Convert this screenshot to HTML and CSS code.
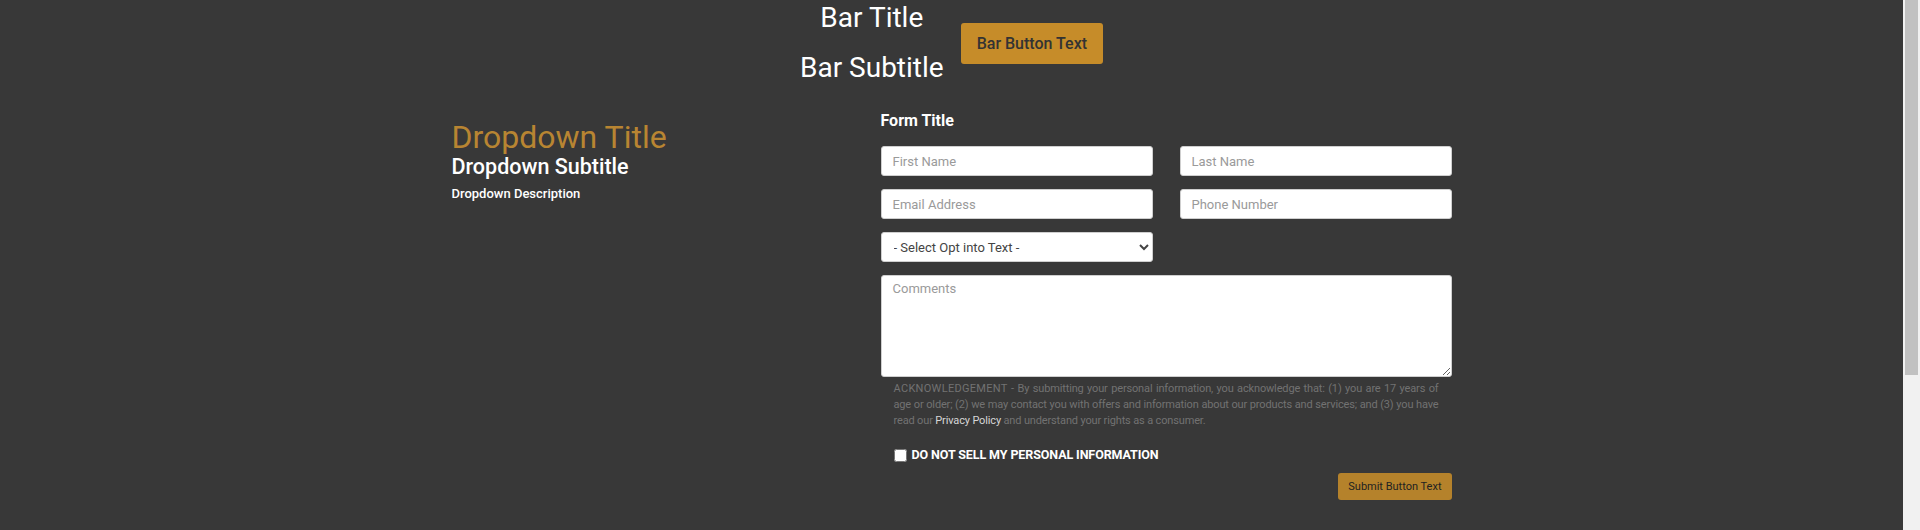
FILE: index.html
```html
<!DOCTYPE html>
<html lang="en">
<head>
<meta charset="utf-8">
<title>Lead Form</title>
<link rel="stylesheet" href="styles.css">
</head>
<body>
<header class="bar">
  <div class="bar-text">
    <div class="bar-title">Bar Title</div>
    <div class="bar-subtitle">Bar Subtitle</div>
  </div>
  <a class="bar-button" href="#">Bar Button Text</a>
</header>
<main class="content">
  <section class="intro">
    <h2 class="dd-title">Dropdown Title</h2>
    <h3 class="dd-subtitle">Dropdown Subtitle</h3>
    <p class="dd-desc">Dropdown Description</p>
  </section>
  <form class="lead-form" onsubmit="return false;">
    <h4 class="form-title">Form Title</h4>
    <div class="fields">
      <input class="field" type="text" placeholder="First Name">
      <input class="field" type="text" placeholder="Last Name">
      <input class="field" type="email" placeholder="Email Address">
      <input class="field" type="tel" placeholder="Phone Number">
      <select class="field select">
        <option>- Select Opt into Text -</option>
        <option>Yes</option>
        <option>No</option>
      </select>
      <textarea class="field comments" placeholder="Comments"></textarea>
    </div>
    <p class="ack"><span class="ack-lead">ACKNOWLEDGEMENT</span> - By submitting your personal information, you acknowledge that: (1) you are 17 years of age or older; (2) we may contact you with offers and information about our products and services; and (3) you have read our <a class="ack-link" href="#">Privacy Policy</a> and understand your rights as a consumer.</p>
    <label class="optout"><input class="optout-box" type="checkbox"><span>DO NOT SELL MY PERSONAL INFORMATION</span></label>
    <div class="actions">
      <button class="submit" type="submit">Submit Button Text</button>
    </div>
  </form>
</main>
<div class="scrollbar" aria-hidden="true"><div class="scrollbar-thumb"></div></div>
</body>
</html>
```

FILE: styles.css
```css
html, body {
  margin: 0;
  padding: 0;
}

body {
  background: #383838;
  font-family: Roboto, "Liberation Sans", Arial, sans-serif;
  color: #ffffff;
  padding-right: 17px;
  padding-bottom: 249px;
}

.scrollbar {
  position: fixed;
  top: 0;
  right: 0;
  width: 17px;
  height: 100vh;
  background: #f1f1f1;
  display: flex;
  justify-content: center;
}

.scrollbar-thumb {
  width: 13px;
  height: 375px;
  background: #c1c1c1;
}

.bar {
  display: flex;
  justify-content: center;
  align-items: center;
  gap: 17px;
}

.bar-text {
  display: flex;
  flex-direction: column;
  align-items: center;
  gap: 14px;
}

.bar-title,
.bar-subtitle {
  font-size: 28px;
  line-height: 36px;
  font-weight: 400;
  color: #ffffff;
}

.bar-button {
  display: inline-flex;
  align-items: center;
  height: 41px;
  padding: 0 16px;
  box-sizing: border-box;
  background: #c68c29;
  color: #333333;
  border-radius: 3px;
  font-size: 16px;
  font-weight: 500;
  text-decoration: none;
}

.content {
  width: 1000px;
  margin: 0 auto;
  padding-top: 24px;
  display: flex;
  justify-content: space-between;
  align-items: flex-start;
}

.intro {
  padding-top: 9px;
}

.dd-title {
  margin: 0;
  font-size: 32px;
  line-height: 36px;
  font-weight: 400;
  color: #b88532;
}

.dd-subtitle {
  margin: 0;
  font-size: 21.5px;
  line-height: 24px;
  font-weight: 500;
  color: #ffffff;
}

.dd-desc {
  margin: 7px 0 0;
  font-size: 13px;
  line-height: 16px;
  font-weight: 500;
  color: #ffffff;
}

.lead-form {
  width: 571px;
}

.form-title {
  margin: 0 0 15px;
  font-size: 16px;
  line-height: 21px;
  font-weight: 700;
  color: #ffffff;
}

.fields {
  display: grid;
  grid-template-columns: 272px 272px;
  column-gap: 27px;
  row-gap: 13px;
}

.field {
  box-sizing: border-box;
  height: 30px;
  margin: 0;
  padding: 0 11px;
  border: 1px solid #cfcfcf;
  border-radius: 3px;
  background: #ffffff;
  font-family: Roboto, "Liberation Sans", Arial, sans-serif;
  font-size: 13px;
  color: #333333;
  outline: none;
}

.field::placeholder {
  color: #9a9a9a;
}

.select {
  padding: 0 8px;
  color: #444444;
}

.comments {
  grid-column: 1 / -1;
  height: 102px;
  padding: 5px 11px;
  line-height: 16px;
  resize: vertical;
}

.ack {
  margin: 4px 0 0;
  padding: 0 13px;
  font-size: 11px;
  line-height: 16px;
  letter-spacing: -0.15px;
  color: #727272;
  text-align: justify;
}

.ack-lead {
  letter-spacing: 0.3px;
}

.ack-link {
  color: #d6d6d6;
  text-decoration: none;
}

.optout {
  display: flex;
  align-items: center;
  gap: 5px;
  margin-top: 18px;
  padding-left: 13px;
  font-size: 12.5px;
  line-height: 16px;
  font-weight: 700;
  letter-spacing: -0.1px;
  color: #ffffff;
}

.optout-box {
  width: 13px;
  height: 13px;
  margin: 0;
}

.actions {
  display: flex;
  justify-content: flex-end;
  margin-top: 10px;
}

.submit {
  height: 27px;
  padding: 0 10px;
  border: none;
  border-radius: 3px;
  background: #b5822b;
  color: #222222;
  font-family: Roboto, "Liberation Sans", Arial, sans-serif;
  font-size: 11px;
  cursor: pointer;
}
```
